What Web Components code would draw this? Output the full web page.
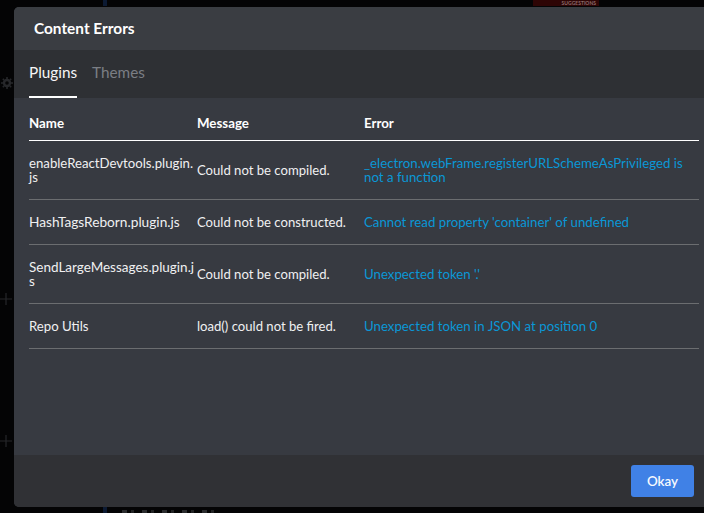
<!DOCTYPE html>
<html>
<head>
<meta charset="utf-8">
<style>
  html, body { margin: 0; height: 100%; background: #040405; overflow: hidden; }
  body { font-family: Lato, "Open Sans", sans-serif; }
</style>
</head>
<body>
<app-backdrop>
  <error-modal heading="Content Errors">
    <error-row name="enableReactDevtools.plugin.&#10;js" message="Could not be compiled." error="_electron.webFrame.registerURLSchemeAsPrivileged is not a function" style="--row-h:59px;--name-size:13.2px"></error-row>
    <error-row name="HashTagsReborn.plugin.js" message="Could not be constructed." error="Cannot read property 'container' of undefined" style="--row-h:45px;--name-size:13.7px"></error-row>
    <error-row name="SendLargeMessages.plugin.j&#10;s" message="Could not be compiled." error="Unexpected token '.'" style="--row-h:59px;--name-size:13.5px"></error-row>
    <error-row name="Repo Utils" message="load() could not be fired." error="Unexpected token in JSON at position 0" style="--row-h:45px;--name-size:13.2px"></error-row>
  </error-modal>
</app-backdrop>

<script>
class AppBackdrop extends HTMLElement {
  constructor() {
    super();
    this.attachShadow({ mode: "open" }).innerHTML = `<style>
      :host { display: block; position: relative; width: 704px; height: 513px; overflow: hidden; background: #040405; }
      .wrap { display: flex; padding: 7px 0 6px 14px; height: 500px; }
      .deco { position: absolute; }
      .bar { left: 103px; top: 0; width: 4px; height: 6px; background: #0c1a33; }
      .bar.low { top: 507px; }
      .red { left: 533px; top: 0; width: 66px; height: 6px; background: #2e0505; text-align: right; padding-right: 3px; box-sizing: border-box; font: 700 5px/6px Lato, sans-serif; color: #8a6a6a; white-space: nowrap; }
      .smudge { left: 122px; top: 510px; width: 100px; height: 3px; background: repeating-linear-gradient(90deg, #2b2c2e 0 5px, transparent 5px 9px, #222324 9px 12px, transparent 12px 20px); }
      svg { position: absolute; fill: none; stroke: #26272a; }
    </style>
    <div class="deco bar"></div>
    <div class="deco bar low"></div>
    <div class="deco red">SUGGESTIONS</div>
    <div class="deco smudge"></div>
    <svg style="left:1px;top:77px" width="12" height="12" viewBox="0 0 12 12"><circle cx="6" cy="6" r="3" stroke-width="2.4"/><path d="M6 0v2M6 10v2M0 6h2M10 6h2M1.8 1.8l1.4 1.4M8.8 8.8l1.4 1.4M1.8 10.2l1.4-1.4M8.8 3.2l1.4-1.4" stroke-width="1.6"/></svg>
    <svg style="left:0;top:293px" width="12" height="12" viewBox="0 0 12 12"><path d="M6 0v12M0 6h12" stroke-width="1.2"/></svg>
    <svg style="left:0;top:435px" width="12" height="12" viewBox="0 0 12 12"><path d="M6 0v12M0 6h12" stroke-width="1.2"/></svg>
    <div class="wrap"><slot></slot></div>`;
  }
}

class ErrorModal extends HTMLElement {
  constructor() {
    super();
    const template = document.createElement("template");
    template.innerHTML = `<style>
      :host { display: flex; flex-direction: column; width: 700px; height: 500px; border-radius: 5px 0 0 5px; overflow: hidden; background: #36393f; color: #fff; }
      header { height: 43px; flex: none; display: flex; align-items: center; padding: 0 0 2px 20px; background: #3a3d42; font-size: 15.4px; font-weight: 700; box-sizing: border-box; }
      nav { height: 48px; flex: none; display: flex; gap: 15px; padding-left: 15px; background: #2e3034; box-sizing: border-box; font-size: 15.3px; }
      nav span { height: 48px; box-sizing: border-box; display: flex; align-items: center; padding-bottom: 4px; color: #7b7e84; }
      nav span.on { color: #f6f6f7; border-bottom: 2px solid #fff; padding-bottom: 2px; }
      main { flex: 1; padding: 0 5px 0 15px; background: #373a41; }
      .head { height: 43px; display: grid; grid-template-columns: 168px 167px 1fr; align-items: center; border-bottom: 1px solid #fff; font-size: 13.3px; font-weight: 700; box-sizing: border-box; padding-top: 7px; }
      footer { height: 52px; flex: none; display: flex; justify-content: flex-end; align-items: center; padding-right: 10px; background: #303135; box-sizing: border-box; }
      button { width: 63px; height: 32px; border: 0; border-radius: 3px; background: #4081e6; color: #f6f9fe; font: 600 13.4px Lato, "Open Sans", sans-serif; }
    </style>
    <header id="title"></header>
    <nav><span class="on">Plugins</span><span>Themes</span></nav>
    <main>
      <div class="head"><div>Name</div><div>Message</div><div>Error</div></div>
      <slot></slot>
    </main>
    <footer><button>Okay</button></footer>`;
    this._shadowRoot = this.attachShadow({ mode: "open" });
    this._shadowRoot.appendChild(template.content.cloneNode(true));
  }

  connectedCallback() {
    this._shadowRoot.getElementById("title").textContent = this.getAttribute("heading");
  }
}

class ErrorRow extends HTMLElement {
  constructor() {
    super();
    this.attachShadow({ mode: "open" }).innerHTML = `<style>
      :host { display: grid; grid-template-columns: 168px 167px 1fr; align-items: center; height: var(--row-h); box-sizing: border-box; border-bottom: 1px solid #6b6d70; font-size: 13.1px; line-height: 14px; color: #f0f0f1; }
      .name { font-size: var(--name-size); white-space: pre-line; }
      .error { color: #0a97d6; font-size: 13.25px; }
    </style>
    <div class="name"></div><div class="message"></div><div class="error"></div>`;
  }

  connectedCallback() {
    for (const key of ["name", "message", "error"]) {
      this.shadowRoot.querySelector("." + key).textContent = this.getAttribute(key);
    }
  }
}

customElements.define("app-backdrop", AppBackdrop);
customElements.define("error-modal", ErrorModal);
customElements.define("error-row", ErrorRow);
</script>
</body>
</html>
